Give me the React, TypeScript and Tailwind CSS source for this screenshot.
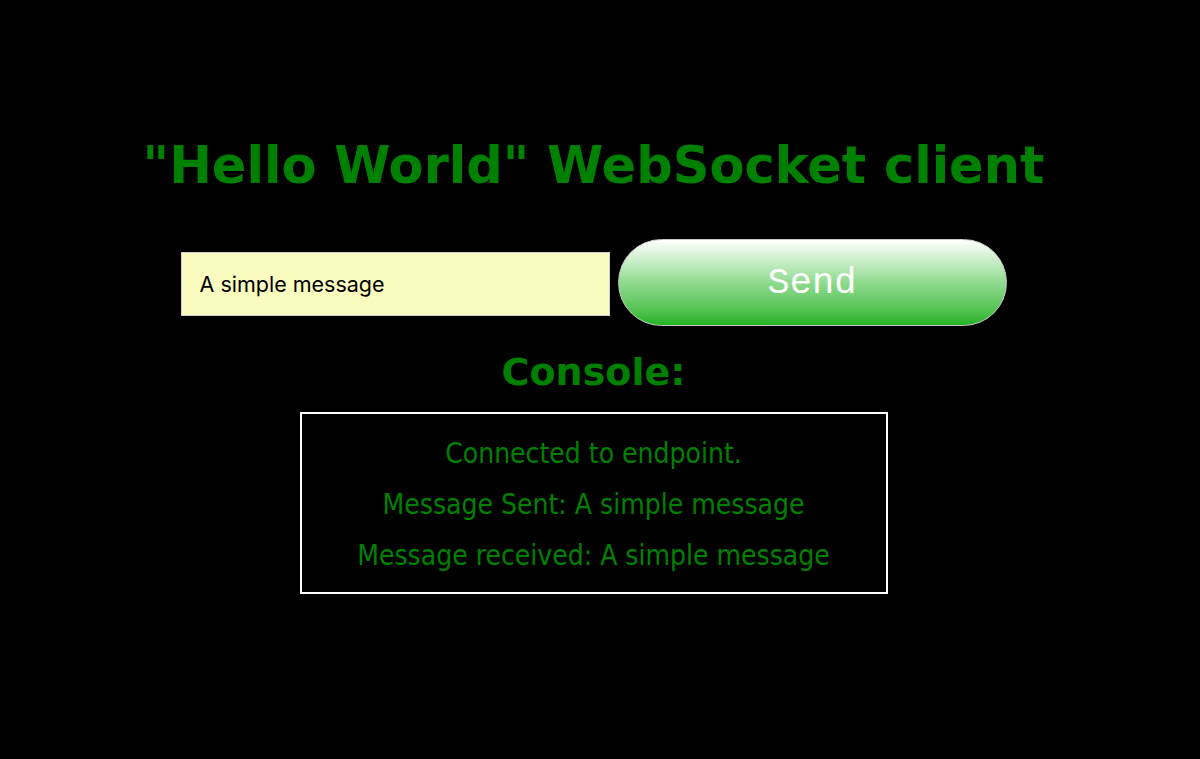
export default function App() {
  return (
    <div className="w-[1200px] h-[759px] bg-black flex flex-col items-center pt-[130px] pr-[13px] font-['DejaVu_Sans',Verdana,sans-serif]">
      <h1 className="text-[#008000] font-bold text-[51px] leading-[72px]">"Hello World" WebSocket client</h1>
      <div className="flex items-center gap-[8px] mt-[37px]">
        <div className="w-[429px] h-[64px] mt-[2px] bg-[#f9fbbf] border border-[#cfcfcf] flex items-center pl-[18px] pt-[2px] text-[21.5px] text-black font-['Inter','Liberation_Sans',sans-serif]">
          A simple message
        </div>
        <button className="w-[389px] h-[87px] rounded-full border border-[#c8c8c8] bg-gradient-to-b from-[#ffffff] via-[#8fdb8f] to-[#22b422] text-white text-[37px] font-light pt-[2px] flex items-center justify-center font-['Courier_New','Nimbus_Mono_PS','FreeMono','Liberation_Mono',monospace]">
          Send
        </button>
      </div>
      <h2 className="text-[#008000] font-bold text-[38px] leading-[48px] mt-[22px]">Console:</h2>
      <div className="w-[588px] h-[182px] border-2 border-white mt-[16px] flex flex-col items-center pt-[22px] gap-[15px] text-[#008000] text-[28px] leading-[36px] font-['DejaVu_Sans_Condensed','DejaVu_Sans',sans-serif] [font-stretch:condensed]">
        <div>Connected to endpoint.</div>
        <div>Message Sent: A simple message</div>
        <div>Message received: A simple message</div>
      </div>
    </div>
  );
}
